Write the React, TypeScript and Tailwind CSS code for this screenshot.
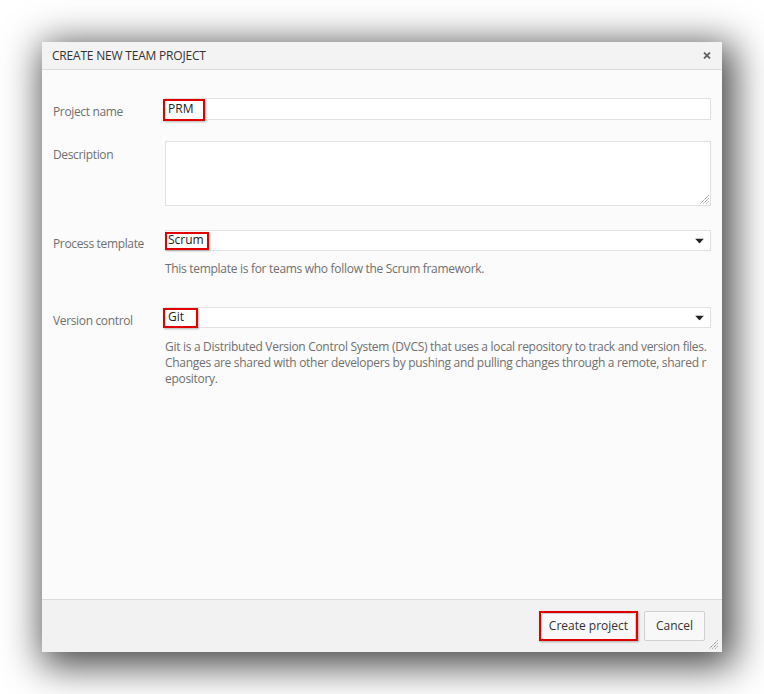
import React from "react";

const font = { fontFamily: '"Open Sans", "Noto Sans", "Liberation Sans", sans-serif' };

function Caret() {
  return (
    <svg width="9" height="5" viewBox="0 0 9 5" className="absolute right-[6px] top-1/2 -translate-y-1/2">
      <path d="M0 0 H9 L4.5 5 Z" fill="#222" />
    </svg>
  );
}

function Grip({ className }: { className: string }) {
  return (
    <svg width="10" height="10" viewBox="0 0 10 10" className={className}>
      <path d="M9.5 1.5 L1.5 9.5 M9.5 4.5 L4.5 9.5 M9.5 7.5 L7.5 9.5" stroke="#555" strokeWidth="0.9" strokeDasharray="1 1" />
    </svg>
  );
}

function Label({ children }: { children: React.ReactNode }) {
  return (
    <div className="w-[112px] shrink-0 pt-[6px] text-[12px] leading-[16px] tracking-[-0.35px] text-[#707070]">{children}</div>
  );
}

export default function App() {
  return (
    <div className="min-h-[694px] w-[764px] bg-white pt-[42px] pl-[42px]" style={font}>
      <div className="flex h-[610px] w-[680px] flex-col bg-[#fbfbfb] shadow-[6px_8px_36px_6px_rgba(0,0,0,0.72)]">
        {/* header */}
        <div className="flex h-[28px] shrink-0 items-center justify-between border-b border-[#dcdcdc] bg-[#f3f3f3] pl-[10px] pr-[11px]">
          <span className="text-[12px] tracking-[-0.2px] text-[#333]">CREATE NEW TEAM PROJECT</span>
          <svg width="8" height="7" viewBox="0 0 8 7">
            <path d="M1 0.5 L7 6.5 M7 0.5 L1 6.5" stroke="#666" strokeWidth="1.8" />
          </svg>
        </div>

        {/* body */}
        <div className="flex-1 px-[11px] pt-[28px]">
          {/* project name */}
          <div className="flex">
            <Label>Project name</Label>
            <div className="relative h-[22px] min-w-0 flex-1 border border-[#e2e2e2] bg-white">
              <span className="absolute left-[2px] top-[2px] text-[12px] leading-[16px] text-[#222]">PRM</span>
              <div className="absolute left-[-3px] top-[0px] h-[22px] w-[42px] border-2 border-[#e00000] shadow-[1px_1px_2px_rgba(0,0,0,0.3)]" />
            </div>
          </div>

          {/* description */}
          <div className="mt-[21px] flex">
            <Label>Description</Label>
            <div className="relative h-[65px] min-w-0 flex-1 border border-[#e2e2e2] bg-white">
              <Grip className="absolute bottom-[1px] right-[1px]" />
            </div>
          </div>

          {/* process template */}
          <div className="mt-[24px] flex">
            <Label>Process template</Label>
            <div className="min-w-0 flex-1">
              <div className="relative h-[21px] border border-[#e2e2e2] bg-white">
                <span className="absolute left-[2px] top-[1px] text-[12px] leading-[16px] text-[#222]">Scrum</span>
                <div className="absolute left-[-1px] top-[1px] h-[18px] w-[44px] border-2 border-[#e00000] shadow-[1px_1px_2px_rgba(0,0,0,0.3)]" />
                <Caret />
              </div>
              <div className="mt-[10px] text-[12px] leading-[16px] tracking-[-0.3px] text-[#707070]">
                This template is for teams who follow the Scrum framework.
              </div>
            </div>
          </div>

          {/* version control */}
          <div className="mt-[30px] flex">
            <Label>Version control</Label>
            <div className="min-w-0 flex-1">
              <div className="relative h-[21px] border border-[#e2e2e2] bg-white">
                <span className="absolute left-[2px] top-[1px] text-[12px] leading-[16px] text-[#222]">Git</span>
                <div className="absolute left-[-3px] top-[0px] h-[20px] w-[35px] border-2 border-[#e00000] shadow-[1px_1px_2px_rgba(0,0,0,0.3)]" />
                <Caret />
              </div>
              <div className="mt-[11px] whitespace-nowrap text-[12px] leading-[16px] tracking-[-0.3px] text-[#707070]">
                Git is a Distributed Version Control System (DVCS) that uses a local repository to track and version files.
                <br />
                Changes are shared with other developers by pushing and pulling changes through a remote, shared r
                <br />
                epository.
              </div>
            </div>
          </div>
        </div>

        {/* footer */}
        <div className="relative flex h-[53px] shrink-0 items-center justify-end gap-[8px] border-t border-[#dcdcdc] bg-[#f2f2f2] pr-[17px]">
          <div className="relative">
            <button className="h-[27px] w-[95px] rounded-[2px] border border-[#d0d0d0] bg-[#f8f8f8] text-[12px] text-[#333]">
              Create project
            </button>
            <div className="absolute left-[-2px] top-[-1px] h-[30px] w-[99px] border-2 border-[#e00000] shadow-[1px_1px_2px_rgba(0,0,0,0.3)]" />
          </div>
          <button className="h-[30px] w-[61px] rounded-[2px] border border-[#d0d0d0] bg-[#f8f8f8] text-[12px] text-[#333]">
            Cancel
          </button>
          <Grip className="absolute bottom-[3px] right-[4px]" />
        </div>
      </div>
    </div>
  );
}
